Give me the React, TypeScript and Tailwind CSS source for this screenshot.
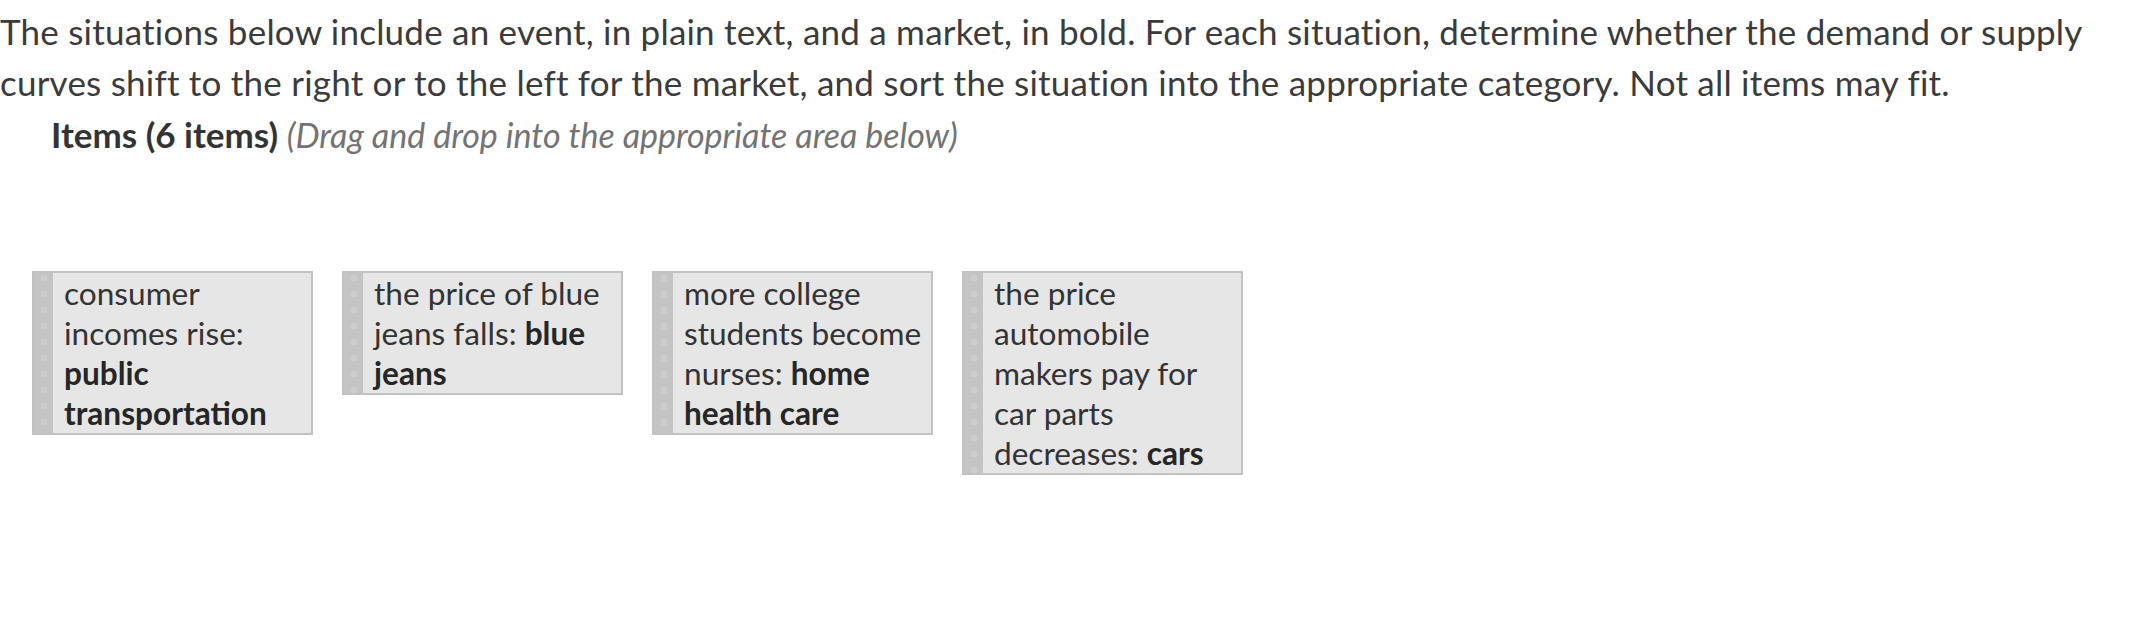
import React from "react";

type Item = { plain: string; bold: string };

const items: Item[] = [
  { plain: "consumer incomes rise: ", bold: "public transportation" },
  { plain: "the price of blue jeans falls: ", bold: "blue jeans" },
  { plain: "more college students become nurses: ", bold: "home health care" },
  { plain: "the price automobile makers pay for car parts decreases: ", bold: "cars" },
];

function Handle() {
  const dots = Array.from({ length: 14 });
  return (
    <div className="relative w-[19px] shrink-0 bg-[#c4c4c4] overflow-hidden">
      <div className="absolute inset-x-0 top-0 flex flex-col items-center gap-[10px] pt-[2px]">
        {dots.map((_, i) => (
          <div key={i} className="w-[6px] h-[6px] shrink-0 bg-[#cdcdcd]" />
        ))}
      </div>
    </div>
  );
}

function Card({ item }: { item: Item }) {
  return (
    <div className="w-[281px] flex border-2 border-[#c2c2c2] bg-[#e6e6e6] self-start">
      <Handle />
      <div className="pl-[11px] pr-[4px] text-[31.6px] leading-[40px] text-[#333333] min-w-0">
        {item.plain}
        <b className="font-bold text-[#262626]">{item.bold}</b>
      </div>
    </div>
  );
}

export default function App() {
  return (
    <div
      className="w-[2142px] h-[634px] bg-white text-[#3b3b3b] pt-[6px]"
      style={{ fontFamily: "Lato, 'Open Sans', sans-serif" }}
    >
      <p className="text-[35px] leading-[51px] tracking-[0.22px] m-0">
        The situations below include an event, in plain text, and a market, in bold. For each situation, determine whether the demand or supply curves shift to the right or to the left for the market, and sort the situation into the appropriate category. Not all items may fit.
      </p>
      <div className="pl-[51px] text-[34px] leading-[52px]">
        <span className="font-bold text-[#333333] text-[35px]">Items (6 items)</span>{" "}
        <span className="italic text-[#737373]">(Drag and drop into the appropriate area below)</span>
      </div>
      <div className="flex items-start gap-[29px] pl-[32px] pt-[110px]">
        {items.map((it, i) => (
          <Card key={i} item={it} />
        ))}
      </div>
    </div>
  );
}
